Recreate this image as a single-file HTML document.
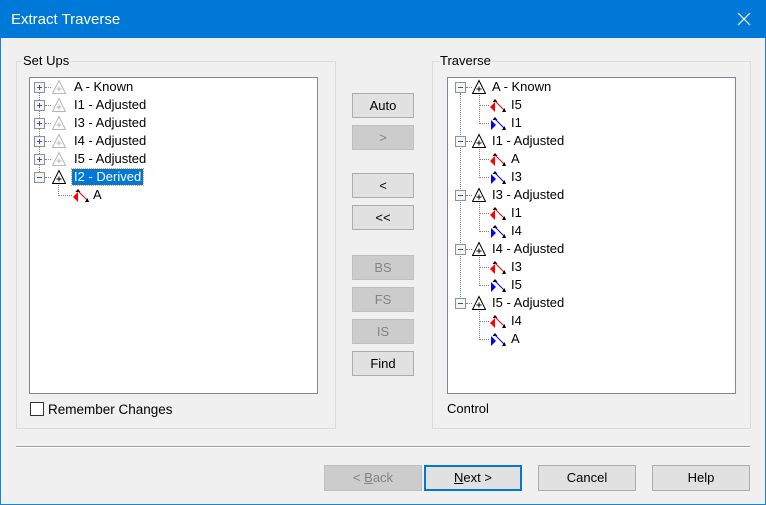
<!DOCTYPE html>
<html><head><meta charset="utf-8"><style>
*{margin:0;padding:0;box-sizing:border-box}
body{width:766px;height:505px;overflow:hidden;background:#f0f0f0;font-family:"Liberation Sans",Arial,sans-serif;font-size:13px;color:#000;position:relative}
.a{position:absolute}
#win{position:absolute;left:0;top:0;width:766px;height:505px;border:1px solid #1883d7}
#title{position:absolute;left:0;top:0;width:766px;height:38px;background:#0078d7;color:#fff;font-size:15px}
.grp{position:absolute;border:1px solid #dcdcdc}
.lbl{position:absolute;background:#f0f0f0;padding:0 1px;line-height:14px}
.tree{position:absolute;background:#fff;border:1px solid #828790}
.btn{position:absolute;width:62px;height:25px;border:1px solid #adadad;background:#e1e1e1;text-align:center;line-height:23px}
.dis{background:#cccccc;border-color:#bfbfbf;color:#838383}
.t{position:absolute;line-height:16px;white-space:nowrap}
.ex{position:absolute;width:11px;height:11px;border:1px solid #919191;background:#f5f5f5}
.ex:before{content:"";position:absolute;left:2px;top:4px;width:5px;height:1px;background:#2d5d9a}
.ex.p:after{content:"";position:absolute;left:4px;top:2px;width:1px;height:5px;background:#2d5d9a}
.dh{position:absolute;border-top:1px dotted #808080;height:0}
.dv{position:absolute;border-left:1px dotted #808080;width:0}
.bb{position:absolute;height:26px;width:98px;border:1px solid #adadad;background:#e1e1e1;text-align:center;line-height:24px;font-size:13px}
</style></head><body>
<svg width="0" height="0" style="position:absolute">
<symbol id="sg" viewBox="0 0 14 16"><path d="M7 1.5L13.5 14.5H0.5Z" fill="none" stroke="#b8b8b8"/><path d="M7 7.5v5M4.5 10h5" stroke="#b8b8b8"/></symbol>
<symbol id="sb" viewBox="0 0 14 16"><path d="M7 1.5L13.5 14.5H0.5Z" fill="#fff" stroke="#000"/><path d="M7 7.5v5M4.5 10h5" stroke="#000"/></symbol>
<symbol id="cr" viewBox="0 0 18 15"><path d="M5 1L7.5 4H2.5Z" fill="#000"/><path d="M5 3L14 12" stroke="#e00000"/><path d="M16 14L12 14L14.5 10Z" fill="#000"/><path d="M5 4L5 14L0 9Z" fill="#ff0000"/></symbol>
<symbol id="cb" viewBox="0 0 18 15"><path d="M5 1L7.5 4H2.5Z" fill="#000"/><path d="M5 3L14 12" stroke="#0000e0"/><path d="M16 14L12 14L14.5 10Z" fill="#000"/><path d="M1 4L1 14L6 9Z" fill="#0000ff"/></symbol>
</svg>
<div id="win"></div>
<div id="title"><span class="a" style="left:11px;top:11px">Extract Traverse</span>
<svg class="a" style="left:737px;top:12px" width="14" height="14"><path d="M1 1L13 13M13 1L1 13" stroke="#fff" stroke-width="1.2"/></svg></div>

<div class="grp" style="left:16px;top:61px;width:320px;height:368px"></div>
<div class="lbl" style="left:22px;top:54px">Set Ups</div>
<div class="tree" style="left:29px;top:77px;width:289px;height:317px"></div>
<div class="dv" style="left:39px;top:88px;height:84px"></div>
<div class="ex p" style="left:34px;top:82px"></div><div class="dh" style="left:45px;top:87px;width:6px"></div>
<div class="ex p" style="left:34px;top:100px"></div><div class="dh" style="left:45px;top:105px;width:6px"></div>
<div class="ex p" style="left:34px;top:118px"></div><div class="dh" style="left:45px;top:123px;width:6px"></div>
<div class="ex p" style="left:34px;top:136px"></div><div class="dh" style="left:45px;top:141px;width:6px"></div>
<div class="ex p" style="left:34px;top:154px"></div><div class="dh" style="left:45px;top:159px;width:6px"></div>
<div class="ex" style="left:34px;top:172px"></div><div class="dh" style="left:45px;top:177px;width:6px"></div>
<svg class="a" style="left:52px;top:79px" width="14" height="16"><use href="#sg"/></svg><div class="t" style="left:74px;top:79px">A - Known</div>
<svg class="a" style="left:52px;top:97px" width="14" height="16"><use href="#sg"/></svg><div class="t" style="left:74px;top:97px">I1 - Adjusted</div>
<svg class="a" style="left:52px;top:115px" width="14" height="16"><use href="#sg"/></svg><div class="t" style="left:74px;top:115px">I3 - Adjusted</div>
<svg class="a" style="left:52px;top:133px" width="14" height="16"><use href="#sg"/></svg><div class="t" style="left:74px;top:133px">I4 - Adjusted</div>
<svg class="a" style="left:52px;top:151px" width="14" height="16"><use href="#sg"/></svg><div class="t" style="left:74px;top:151px">I5 - Adjusted</div>
<svg class="a" style="left:52px;top:169px" width="14" height="16"><use href="#sb"/></svg>
<div class="t" style="left:72px;top:169px;background:#0078d7;color:#fff;padding:0 2px;outline:1px dotted #f0a030">I2 - Derived</div>
<div class="dv" style="left:58px;top:185px;height:11px"></div><div class="dh" style="left:58px;top:195px;width:14px"></div>
<svg class="a" style="left:73px;top:188px" width="18" height="15"><use href="#cr"/></svg><div class="t" style="left:93px;top:187px">A</div>

<div style="position:absolute;left:30px;top:402px;width:14px;height:14px;border:1px solid #333;background:#fff"></div>
<div class="t" style="left:48px;top:402px;font-size:13.5px">Remember Changes</div>

<div class="btn" style="left:352px;top:93px">Auto</div>
<div class="btn dis" style="left:352px;top:125px">&gt;</div>
<div class="btn" style="left:352px;top:173px">&lt;</div>
<div class="btn" style="left:352px;top:205px">&lt;&lt;</div>
<div class="btn dis" style="left:352px;top:255px">BS</div>
<div class="btn dis" style="left:352px;top:287px">FS</div>
<div class="btn dis" style="left:352px;top:319px">IS</div>
<div class="btn" style="left:352px;top:351px">Find</div>

<div class="grp" style="left:432px;top:61px;width:319px;height:368px"></div>
<div class="lbl" style="left:439px;top:54px">Traverse</div>
<div class="tree" style="left:447px;top:77px;width:289px;height:317px"></div>
<div class="dv" style="left:460px;top:93px;height:214px"></div>
<div class="t" style="left:447px;top:401px">Control</div>

<div class="ex" style="left:455px;top:82px"></div><div class="dh" style="left:466px;top:87px;width:6px"></div>
<svg class="a" style="left:472px;top:79px" width="14" height="16"><use href="#sb"/></svg><div class="t" style="left:492px;top:79px">A - Known</div>
<div class="dv" style="left:479px;top:95px;height:29px"></div><div class="dh" style="left:479px;top:105px;width:10px"></div><div class="dh" style="left:479px;top:123px;width:10px"></div>
<svg class="a" style="left:490px;top:98px" width="18" height="15"><use href="#cr"/></svg><div class="t" style="left:511px;top:97px">I5</div>
<svg class="a" style="left:490px;top:116px" width="18" height="15"><use href="#cb"/></svg><div class="t" style="left:511px;top:115px">I1</div>

<div class="ex" style="left:455px;top:136px"></div><div class="dh" style="left:466px;top:141px;width:6px"></div>
<svg class="a" style="left:472px;top:133px" width="14" height="16"><use href="#sb"/></svg><div class="t" style="left:492px;top:133px">I1 - Adjusted</div>
<div class="dv" style="left:479px;top:149px;height:29px"></div><div class="dh" style="left:479px;top:159px;width:10px"></div><div class="dh" style="left:479px;top:177px;width:10px"></div>
<svg class="a" style="left:490px;top:152px" width="18" height="15"><use href="#cr"/></svg><div class="t" style="left:511px;top:151px">A</div>
<svg class="a" style="left:490px;top:170px" width="18" height="15"><use href="#cb"/></svg><div class="t" style="left:511px;top:169px">I3</div>

<div class="ex" style="left:455px;top:190px"></div><div class="dh" style="left:466px;top:195px;width:6px"></div>
<svg class="a" style="left:472px;top:187px" width="14" height="16"><use href="#sb"/></svg><div class="t" style="left:492px;top:187px">I3 - Adjusted</div>
<div class="dv" style="left:479px;top:203px;height:29px"></div><div class="dh" style="left:479px;top:213px;width:10px"></div><div class="dh" style="left:479px;top:231px;width:10px"></div>
<svg class="a" style="left:490px;top:206px" width="18" height="15"><use href="#cr"/></svg><div class="t" style="left:511px;top:205px">I1</div>
<svg class="a" style="left:490px;top:224px" width="18" height="15"><use href="#cb"/></svg><div class="t" style="left:511px;top:223px">I4</div>

<div class="ex" style="left:455px;top:244px"></div><div class="dh" style="left:466px;top:249px;width:6px"></div>
<svg class="a" style="left:472px;top:241px" width="14" height="16"><use href="#sb"/></svg><div class="t" style="left:492px;top:241px">I4 - Adjusted</div>
<div class="dv" style="left:479px;top:257px;height:29px"></div><div class="dh" style="left:479px;top:267px;width:10px"></div><div class="dh" style="left:479px;top:285px;width:10px"></div>
<svg class="a" style="left:490px;top:260px" width="18" height="15"><use href="#cr"/></svg><div class="t" style="left:511px;top:259px">I3</div>
<svg class="a" style="left:490px;top:278px" width="18" height="15"><use href="#cb"/></svg><div class="t" style="left:511px;top:277px">I5</div>

<div class="ex" style="left:455px;top:298px"></div><div class="dh" style="left:466px;top:303px;width:6px"></div>
<svg class="a" style="left:472px;top:295px" width="14" height="16"><use href="#sb"/></svg><div class="t" style="left:492px;top:295px">I5 - Adjusted</div>
<div class="dv" style="left:479px;top:311px;height:29px"></div><div class="dh" style="left:479px;top:321px;width:10px"></div><div class="dh" style="left:479px;top:339px;width:10px"></div>
<svg class="a" style="left:490px;top:314px" width="18" height="15"><use href="#cr"/></svg><div class="t" style="left:511px;top:313px">I4</div>
<svg class="a" style="left:490px;top:332px" width="18" height="15"><use href="#cb"/></svg><div class="t" style="left:511px;top:331px">A</div>

<div class="a" style="left:16px;top:446px;width:734px;height:1px;background:#a0a0a0"></div>
<div class="a" style="left:16px;top:447px;width:734px;height:1px;background:#fff"></div>

<div class="bb" style="left:324px;top:465px;background:#cccccc;border-color:#bfbfbf;color:#838383">&lt; <u>B</u>ack</div>
<div class="bb" style="left:424px;top:465px;border:2px solid #0078d7;line-height:22px"><u>N</u>ext &gt;</div>
<div class="bb" style="left:538px;top:465px">Cancel</div>
<div class="bb" style="left:652px;top:465px">Help</div>
</body></html>
